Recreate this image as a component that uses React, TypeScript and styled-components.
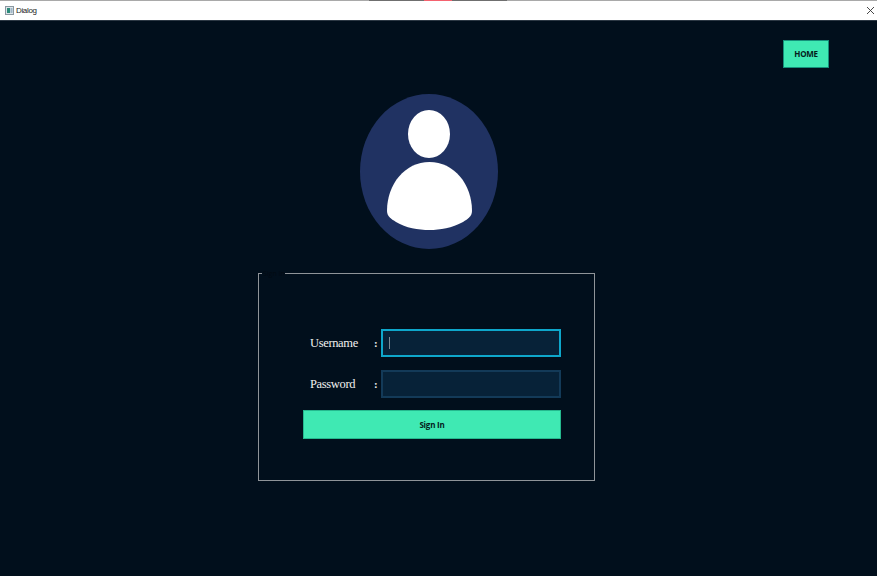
import React from "react";
import styled, { createGlobalStyle } from "styled-components";

const Global = createGlobalStyle`
  html, body { margin: 0; padding: 0; height: 100%; background: #010f1c; }
  #root { height: 100%; }
  * { box-sizing: border-box; }
`;

const Page = styled.div`
  width: 877px;
  height: 576px;
  display: flex;
  flex-direction: column;
  overflow: hidden;
  background: #010f1c;
`;

const TitleBar = styled.header`
  height: 21px;
  flex: none;
  display: flex;
  flex-direction: column;
  background: #fff;
  border-bottom: 1px solid #2c3844;
`;

const TopStrip = styled.div`
  height: 1px;
  flex: none;
  display: flex;
  background: #a9a9a9;
`;

const StripPart = styled.span<{ $w: number; $c: string }>`
  width: ${(p) => p.$w}px;
  background: ${(p) => p.$c};
`;

const TitleRow = styled.div`
  flex: 1;
  display: flex;
  align-items: center;
  padding: 0 2px 0 5px;
  gap: 2px;
`;

const TitleText = styled.span`
  flex: 1;
  font: 400 8px "Liberation Sans", sans-serif;
  letter-spacing: -0.35px;
  color: #222;
`;

const Body = styled.main`
  flex: 1;
  display: flex;
  flex-direction: column;
`;

const TopRow = styled.div`
  display: flex;
  justify-content: flex-end;
  padding: 19px 48px 0 0;
`;

const HomeButton = styled.button`
  width: 46px;
  height: 28px;
  padding: 0 0 2px;
  background: #3fe9b3;
  border: 1px solid #15907a;
  color: #04201c;
  font: 700 8px "Open Sans", sans-serif;
  letter-spacing: -0.3px;
`;

const Avatar = styled.svg`
  display: block;
  width: 138px;
  height: 155px;
  margin: 26px 0 0 360px;
`;

const Frame = styled.fieldset`
  width: 337px;
  height: 208px;
  margin: 24px 0 0 258px;
  padding: 0;
  min-inline-size: 0;
  border: 1px solid #8f9499;
`;

const FrameTitle = styled.legend`
  margin-left: 3px;
  padding: 0 0 0 1px;
  width: 23px;
  height: 1px;
  font: 400 7px/1px "Open Sans", sans-serif;
  color: #010a12;
`;

const FormArea = styled.div`
  display: flex;
  flex-direction: column;
  padding: 55px 0 0 44px;
`;

const Row = styled.div`
  display: flex;
  align-items: center;
  height: 28px;
  margin-bottom: 13px;
`;

const FieldLabel = styled.label`
  width: 64px;
  margin-left: 7px;
  font: 400 12.5px "Liberation Serif", serif;
  letter-spacing: -0.35px;
  color: #f0f0f0;
`;

const Colon = styled.span`
  width: 7px;
  font: 700 11px "Liberation Serif", serif;
  color: #f0f0f0;
`;

const Field = styled.div<{ $focused?: boolean }>`
  width: 180px;
  height: 28px;
  display: flex;
  align-items: center;
  padding-left: 6px;
  background: #072238;
  border: ${(p) => (p.$focused ? "2px solid #0ea7cb" : "2px solid #133a58")};
`;

const Caret = styled.span`
  width: 1px;
  height: 12px;
  background: #7d8a94;
`;

const SignInButton = styled.button`
  width: 258px;
  height: 29px;
  margin-top: -1px;
  padding: 0;
  background: #3fe9b3;
  border: 1px solid #25b98e;
  color: #04201c;
  font: 700 8px "Open Sans", sans-serif;
  letter-spacing: -0.2px;
`;

export default function App() {
  return (
    <Page>
      <Global />
      <TitleBar>
        <TopStrip>
          <StripPart $w={369} $c="#a9a9a9" />
          <StripPart $w={55} $c="#6f6f6f" />
          <StripPart $w={28} $c="#f4626f" />
          <StripPart $w={55} $c="#6f6f6f" />
        </TopStrip>
        <TitleRow>
          <svg width="9" height="9" viewBox="0 0 9 9">
            <rect x="0.5" y="0.5" width="8" height="8" fill="#dfe6ea" stroke="#8a97a0" />
            <rect x="2" y="2" width="3" height="5" fill="#2c8a7a" />
            <rect x="5.5" y="2" width="2" height="5" fill="#9fb6c6" />
          </svg>
          <TitleText>Dialog</TitleText>
          <svg width="9" height="9" viewBox="0 0 9 9">
            <path d="M1 1L8 8M8 1L1 8" stroke="#333" strokeWidth="0.9" fill="none" />
          </svg>
        </TitleRow>
      </TitleBar>
      <Body>
        <TopRow>
          <HomeButton>HOME</HomeButton>
        </TopRow>
        <Avatar viewBox="0 0 138 155">
          <ellipse cx="69" cy="77.5" rx="69" ry="77.5" fill="#203262" />
          <ellipse cx="69" cy="40" rx="21" ry="24" fill="#fff" />
          <path
            d="M27 117C27 90 45 68 69.5 68C94 68 112 90 112 117C112 122 108 125 103 128C92 134 80 136 69.5 136C58 136 46 134 36 128C31 125 27 122 27 117Z"
            fill="#fff"
          />
        </Avatar>
        <Frame>
          <FrameTitle>Sign In</FrameTitle>
          <FormArea>
            <Row>
              <FieldLabel>Username</FieldLabel>
              <Colon>:</Colon>
              <Field $focused>
                <Caret />
              </Field>
            </Row>
            <Row>
              <FieldLabel>Password</FieldLabel>
              <Colon>:</Colon>
              <Field />
            </Row>
            <SignInButton>Sign In</SignInButton>
          </FormArea>
        </Frame>
      </Body>
    </Page>
  );
}
